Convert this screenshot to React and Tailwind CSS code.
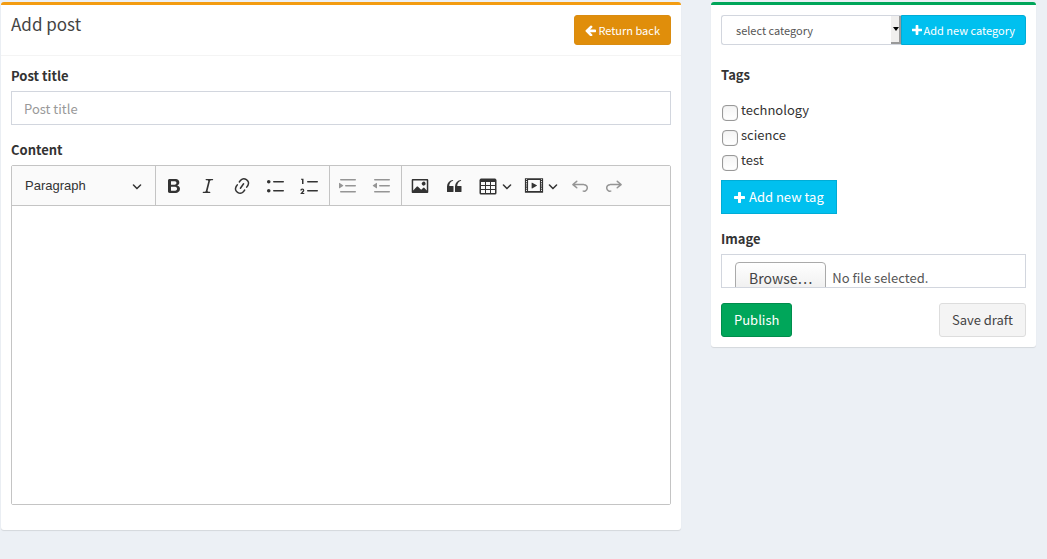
import React, { useState } from 'react';
import clsx from 'clsx';

const ICONS = {
  bold: 'M10.187 17H5.773c-.637 0-1.092-.138-1.364-.415-.273-.277-.409-.718-.409-1.323V4.738c0-.617.14-1.062.419-1.332.279-.27.73-.406 1.354-.406h4.68c.69 0 1.288.041 1.793.124.506.083.96.242 1.36.478.341.197.644.447.906.75a3.262 3.262 0 0 1 .808 2.162c0 1.401-.722 2.426-2.167 3.075C15.05 10.175 16 11.315 16 13.01a3.756 3.756 0 0 1-2.296 3.504 6.1 6.1 0 0 1-1.517.377c-.571.073-1.238.11-2 .11zm-.217-6.217H7v4.087h3.069c1.977 0 2.965-.69 2.965-2.072 0-.707-.256-1.22-.768-1.537-.512-.319-1.277-.478-2.296-.478zM7 5.13v3.619h2.606c.729 0 1.292-.067 1.69-.2a1.6 1.6 0 0 0 .91-.765c.165-.267.247-.566.247-.897 0-.707-.26-1.176-.778-1.409-.519-.232-1.31-.348-2.375-.348H7z',
  italic: 'm9.586 14.633.021.004c-.036.335.095.655.393.962.082.083.173.15.274.201h1.474a.6.6 0 1 1 0 1.2H5.304a.6.6 0 0 1 0-1.2h1.15c.474-.07.809-.182 1.005-.334.157-.122.291-.32.404-.597l2.416-9.55a1.053 1.053 0 0 0-.281-.823 1.12 1.12 0 0 0-.442-.296H8.15a.6.6 0 0 1 0-1.2h6.443a.6.6 0 1 1 0 1.2h-1.195c-.376.056-.65.155-.823.296-.215.175-.423.439-.623.79l-2.366 9.347z',
  link: 'm11.077 15 .991-1.416a.75.75 0 1 1 1.229.86l-1.148 1.64a.748.748 0 0 1-.217.206 5.251 5.251 0 0 1-8.503-5.955.741.741 0 0 1 .12-.274l1.147-1.639a.75.75 0 1 1 1.228.86L4.933 10.7l.006.003a3.75 3.75 0 0 0 6.132 4.294l.006.004zm5.494-5.335a.748.748 0 0 1-.12.274l-1.147 1.639a.75.75 0 1 1-1.228-.86l.86-1.23a3.75 3.75 0 0 0-6.144-4.301l-.86 1.229a.75.75 0 0 1-1.229-.86l1.148-1.64a.748.748 0 0 1 .217-.206 5.251 5.251 0 0 1 8.503 5.955zm-4.563-2.532a.75.75 0 0 1 .184 1.045l-3.155 4.505a.75.75 0 1 1-1.229-.86l3.155-4.506a.75.75 0 0 1 1.045-.184z',
  bulleted: 'M7 5.75c0 .414.336.75.75.75h9.5a.75.75 0 1 0 0-1.5h-9.5a.75.75 0 0 0-.75.75zm-6 0C1 4.784 1.777 4 2.75 4c.966 0 1.75.777 1.75 1.75 0 .966-.777 1.75-1.75 1.75C1.784 7.5 1 6.723 1 5.75zm6 9c0 .414.336.75.75.75h9.5a.75.75 0 1 0 0-1.5h-9.5a.75.75 0 0 0-.75.75zm-6 0c0-.966.777-1.75 1.75-1.75.966 0 1.75.777 1.75 1.75 0 .966-.777 1.75-1.75 1.75-.966 0-1.75-.777-1.75-1.75z',
  numbered: 'M7 5.75c0 .414.336.75.75.75h9.5a.75.75 0 1 0 0-1.5h-9.5a.75.75 0 0 0-.75.75zM3.5 3v5H2V3.7H1v-1h2.5V3zM.343 17.857l2.59-3.257H2.92a.6.6 0 1 0-1.04 0H.302a2 2 0 1 1 3.995 0h-.001c-.048.405-.16.734-.333.988-.175.254-.59.692-1.244 1.312H4.3v1h-4l.043-.043zM7 14.75a.75.75 0 0 1 .75-.75h9.5a.75.75 0 1 1 0 1.5h-9.5a.75.75 0 0 1-.75-.75z',
  indent: 'M2 3.75c0 .414.336.75.75.75h14.5a.75.75 0 1 0 0-1.5H2.75a.75.75 0 0 0-.75.75zm5 6c0 .414.336.75.75.75h9.5a.75.75 0 1 0 0-1.5h-9.5a.75.75 0 0 0-.75.75zM2.75 16.5h14.5a.75.75 0 1 0 0-1.5H2.75a.75.75 0 1 0 0 1.5zM1.632 6.95 5.02 9.358a.4.4 0 0 1-.013.661l-3.39 2.207A.4.4 0 0 1 1 11.892V7.275a.4.4 0 0 1 .632-.326z',
  outdent: 'M2 3.75c0 .414.336.75.75.75h14.5a.75.75 0 1 0 0-1.5H2.75a.75.75 0 0 0-.75.75zm5 6c0 .414.336.75.75.75h9.5a.75.75 0 1 0 0-1.5h-9.5a.75.75 0 0 0-.75.75zM2.75 16.5h14.5a.75.75 0 1 0 0-1.5H2.75a.75.75 0 1 0 0 1.5zM4.368 6.95.98 9.358a.4.4 0 0 0 .013.661l3.39 2.207A.4.4 0 0 0 5 11.892V7.275a.4.4 0 0 0-.632-.326z',
  image: 'M6.91 10.54c.26-.23.64-.21.88.03l3.36 3.14 2.23-2.06a.64.64 0 0 1 .87 0l2.52 2.97V4.5H3.2v10.12l3.71-4.08zm10.27-7.51c.6 0 1.09.47 1.09 1.05v11.84c0 .59-.49 1.06-1.09 1.06H2.79c-.6 0-1.09-.47-1.09-1.06V4.08c0-.58.49-1.05 1.1-1.05h14.38zm-5.22 5.56a1.96 1.96 0 1 1 3.4-1.96 1.96 1.96 0 0 1-3.4 1.96z',
  quote: 'M3 10.423a6.5 6.5 0 0 1 6.056-6.408l.038.67C6.448 5.423 5.354 7.663 5.22 10H9c.552 0 .5.432.5.986v4.511c0 .554-.448.503-1 .503h-5c-.552 0-.5-.449-.5-1.003v-4.574zm8 0a6.5 6.5 0 0 1 6.056-6.408l.038.67c-2.646.739-3.74 2.979-3.873 5.315H17c.552 0 .5.432.5.986v4.511c0 .554-.448.503-1 .503h-5c-.552 0-.5-.449-.5-1.003v-4.574z',
  table: 'M3 6v3h4V6H3zm0 4v3h4v-3H3zm0 4v3h4v-3H3zm5 3h4v-3H8v3zm5 0h4v-3h-4v3zm4-4v-3h-4v3h4zm0-4V6h-4v3h4zm1.5 8a1.5 1.5 0 0 1-1.5 1.5H3A1.5 1.5 0 0 1 1.5 17V4c.222-.863 1.068-1.5 2-1.5h13c.932 0 1.778.637 2 1.5v13zM12 13v-3H8v3h4zm0-4V6H8v3h4z',
  media: 'M1.587 1.5c-.612 0-.601-.029-.601.551v14.84c0 .59-.01.559.591.559h18.846c.602 0 .591.03.591-.56V2.052c0-.58.01-.55-.591-.55H1.587zm.701.971h1.003v1H2.288v-1zm16.448 0h1.003v1h-1.003v-1zm-14.24 1h13.008v12H4.467l.029-12zm-2.208 1h1.003v1H2.288v-1zm16.448 0h1.003v1h-1.003v-1zm-16.448 2h1.003v1H2.288v-1zm16.448 0h1.003v1h-1.003v-1zm-16.448 2h1.003v1H2.288v-1zm16.448 0h1.003v1h-1.003v-1zm-16.448 2h1.003v1H2.288v-1zm16.448 0h1.003v1h-1.003v-1zm-16.448 2h1.003v1H2.288v-1zm16.448 0h1.003v1h-1.003v-1zm-16.448 2h1.003l-.029 1h-.974v-1zm16.448 0h1.003v1h-1.003v-1zM8.374 6.648a.399.399 0 0 1 .395-.4.402.402 0 0 1 .2.049l5.148 2.824a.4.4 0 0 1 0 .7l-5.148 2.824a.403.403 0 0 1-.595-.35V6.648z',
  undo: 'm5.042 9.367 2.189 1.837a.75.75 0 0 1-.965 1.149l-3.788-3.18a.747.747 0 0 1-.21-.284.75.75 0 0 1 .17-.945L6.23 4.762a.75.75 0 1 1 .964 1.15L4.863 7.866h8.917A.75.75 0 0 1 14 7.9a4 4 0 1 1-1.477 7.718l.344-1.489a2.5 2.5 0 1 0 1.094-4.73l.008-.032H5.042z',
  redo: 'm14.958 9.367-2.189 1.837a.75.75 0 0 0 .965 1.149l3.788-3.18a.747.747 0 0 0 .21-.284.75.75 0 0 0-.17-.945L13.77 4.762a.75.75 0 1 0-.964 1.15l2.331 1.955H6.22A.75.75 0 0 0 6 7.9a4 4 0 1 0 1.477 7.718l-.344-1.489A2.5 2.5 0 1 1 6.039 9.4l-.008-.032h8.927z'
};

const TOOL_GROUPS = [
  [
    { icon: 'bold', label: 'Bold' },
    { icon: 'italic', label: 'Italic' },
    { icon: 'link', label: 'Link' },
    { icon: 'bulleted', label: 'Bulleted List' },
    { icon: 'numbered', label: 'Numbered List' }
  ],
  [
    { icon: 'indent', label: 'Increase indent', disabled: true },
    { icon: 'outdent', label: 'Decrease indent', disabled: true }
  ],
  [
    { icon: 'image', label: 'Insert image' },
    { icon: 'quote', label: 'Block quote' },
    { icon: 'table', label: 'Insert table', dropdown: true },
    { icon: 'media', label: 'Insert media', dropdown: true },
    { icon: 'undo', label: 'Undo', disabled: true },
    { icon: 'redo', label: 'Redo', disabled: true }
  ]
];

const TAGS = ['technology', 'science', 'test'];

const Chevron = () => (
  <svg viewBox="0 0 10 10" className="size-[10px] shrink-0" fill="currentColor">
    <path d="M.941 4.523a.75.75 0 1 1 1.06-1.06l3.006 3.005 3.005-3.005a.75.75 0 1 1 1.06 1.06l-3.549 3.55a.75.75 0 0 1-1.168-.136L.941 4.523z" />
  </svg>
);

const PlusIcon = ({ className }) => (
  <svg viewBox="192 128 1408 1408" className={className} fill="currentColor">
    <path d="M1600 736v192q0 40-28 68t-68 28h-416v416q0 40-28 68t-68 28h-192q-40 0-68-28t-28-68v-416h-416q-40 0-68-28t-28-68v-192q0-40 28-68t68-28h416v-416q0-40 28-68t68-28h192q40 0 68 28t28 68v416h416q40 0 68 28t28 68z" />
  </svg>
);

const ArrowLeftIcon = () => (
  <svg viewBox="128 128 1536 1536" className="size-[11px]" fill="currentColor">
    <path d="M1664 896v128q0 53-32.5 90.5t-84.5 37.5h-704l293 294q38 36 38 90t-38 90l-75 76q-37 37-90 37-52 0-91-37l-651-652q-37-37-37-90 0-52 37-91l651-650q38-38 91-38 52 0 90 38l75 74q38 38 38 91t-38 91l-293 293h704q52 0 84.5 37.5t32.5 90.5z" />
  </svg>
);

function ToolButton({ icon, label, disabled, dropdown }) {
  return (
    <button
      type="button"
      aria-label={label}
      disabled={disabled}
      className={clsx(
        'flex h-8 items-center rounded-xs pl-[6px] text-[#333]',
        dropdown ? 'w-11 gap-1' : 'w-8',
        disabled && 'opacity-50'
      )}
    >
      <svg
        viewBox={icon === 'media' ? '0 0 22 20' : '0 0 20 20'}
        className="size-5 shrink-0"
        fill="currentColor"
      >
        <path d={ICONS[icon]} />
      </svg>
      {dropdown && <Chevron />}
    </button>
  );
}

function Editor() {
  return (
    <div className="rounded-xs border border-[#c4c4c4]">
      <div className="flex flex-wrap border-b border-[#c4c4c4] bg-[#fafafa]">
        <button
          type="button"
          className="flex h-[39px] w-36 items-center justify-between border-r border-[#c4c4c4] px-[13px] font-['Liberation_Sans',sans-serif] text-[13px] text-[#333]"
        >
          Paragraph
          <Chevron />
        </button>
        {TOOL_GROUPS.map((group, index) => (
          <div
            key={index}
            className="flex h-[39px] items-center gap-[2px] border-r border-[#c4c4c4] pr-[3px] pl-[2px] last:border-r-0"
          >
            {group.map((tool) => (
              <ToolButton key={tool.icon} {...tool} />
            ))}
          </div>
        ))}
      </div>
      <textarea
        id="content"
        className="block h-[298px] w-full resize-none bg-white px-3 py-2 outline-none"
      />
    </div>
  );
}

export default function App() {
  const [title, setTitle] = useState('');
  const [checked, setChecked] = useState([]);

  const toggleTag = (tag) => {
    setChecked(checked.includes(tag) ? checked.filter((t) => t !== tag) : [...checked, tag]);
  };

  return (
    <div className="min-h-screen bg-[#ecf0f5] pt-[2px] pr-[11px] pl-px font-['Noto_Sans_CJK_SC',sans-serif] text-[13px] leading-5 text-[#333]">
      <form
        className="grid grid-cols-3 items-start gap-[30px]"
        onSubmit={(e) => e.preventDefault()}
      >
        {/* Post */}
        <section className="col-span-2 rounded-[3px] border-t-3 border-[#f39c12] bg-white shadow-[0_1px_1px_rgba(0,0,0,0.1)]">
          <header className="flex items-start justify-between border-b border-[#f4f4f4] p-[10px]">
            <h1 className="text-[17px] leading-[18px] text-[#444]">Add post</h1>
            <a
              href="#"
              className="flex h-[30px] items-center gap-[2px] rounded-[3px] border border-[#da8c10] bg-[#e08e0b] px-[10px] text-[11px] text-white"
            >
              <ArrowLeftIcon />
              Return back
            </a>
          </header>
          <div className="p-[10px] pb-[25px]">
            <label htmlFor="title" className="mb-[5px] block font-bold">
              Post title
            </label>
            <input
              id="title"
              type="text"
              placeholder="Post title"
              value={title}
              onChange={(e) => setTitle(e.target.value)}
              className="mb-[15px] block h-[34px] w-full border border-[#d2d6de] bg-white px-3 text-[#555] outline-none placeholder:text-[#999]"
            />
            <label htmlFor="content" className="mb-[5px] block font-bold">
              Content
            </label>
            <Editor />
          </div>
        </section>

        {/* Sidebar */}
        <section className="rounded-[3px] border-t-3 border-[#00a65a] bg-white p-[10px] shadow-[0_1px_1px_rgba(0,0,0,0.1)]">
          <div className="mb-5 flex">
            <div className="relative flex-1">
              <select
                aria-label="Category"
                className="h-[30px] w-full appearance-none rounded-l-[3px] border border-r-0 border-[#d2d6de] bg-white pl-[14px] text-[11px] text-[#555] outline-none"
              >
                <option>select category</option>
              </select>
              <span className="pointer-events-none absolute inset-y-px right-0 flex w-[10px] items-center justify-end border-r-2 border-b-2 border-[#999] bg-[#f0efee] text-black">
                <svg viewBox="0 0 6 4" className="h-1 w-[6px]" fill="currentColor">
                  <path d="M0 0h6L3 4z" />
                </svg>
              </span>
            </div>
            <button
              type="button"
              className="flex h-[30px] items-center gap-[2px] rounded-r-[3px] border border-[#00acd6] bg-[#00c0ef] px-[10px] text-[11px] text-white"
            >
              <PlusIcon className="size-[10px]" />
              Add new category
            </button>
          </div>

          <fieldset className="mb-[15px]">
            <legend className="mb-[15px] block font-bold">Tags</legend>
            {TAGS.map((tag) => (
              <label key={tag} className="mb-[5px] flex h-5 w-fit items-start gap-[3px] pl-px">
                <input
                  type="checkbox"
                  checked={checked.includes(tag)}
                  onChange={() => toggleTag(tag)}
                  className="mt-[5px] size-4 appearance-none rounded-sm border border-[#999] bg-linear-to-b from-[#f4f4f4] to-white shadow-[inset_0_0_1px_rgba(0,0,0,0.3)] checked:bg-[#00c0ef]"
                />
                {tag}
              </label>
            ))}
            <button
              type="button"
              className="mt-[10px] flex h-[34px] items-center gap-1 border border-[#00acd6] bg-[#00c0ef] px-3 text-white"
            >
              <PlusIcon className="size-[11px]" />
              Add new tag
            </button>
          </fieldset>

          <label htmlFor="image" className="mb-[5px] block font-bold">
            Image
          </label>
          <label
            htmlFor="image"
            className="mb-[15px] flex h-[34px] items-start gap-[6px] overflow-hidden border border-[#d2d6de] px-[13px] pt-[7px] text-[#555]"
          >
            <input id="image" type="file" className="sr-only" />
            <span className="h-[34px] rounded-sm border border-[#aaa] bg-linear-to-b from-white to-[#ececec] px-[13px] pt-[5px] text-sm text-[#444]">
              Browse…
            </span>
            <span className="pt-[6px]">No file selected.</span>
          </label>

          <div className="flex justify-between">
            <button
              type="submit"
              className="h-[34px] rounded-[3px] border border-[#008d4c] bg-[#00a65a] px-3 text-white"
            >
              Publish
            </button>
            <button
              type="button"
              className="h-[34px] rounded-[3px] border border-[#ddd] bg-[#f4f4f4] px-3 text-[#444]"
            >
              Save draft
            </button>
          </div>
        </section>
      </form>
    </div>
  );
}
